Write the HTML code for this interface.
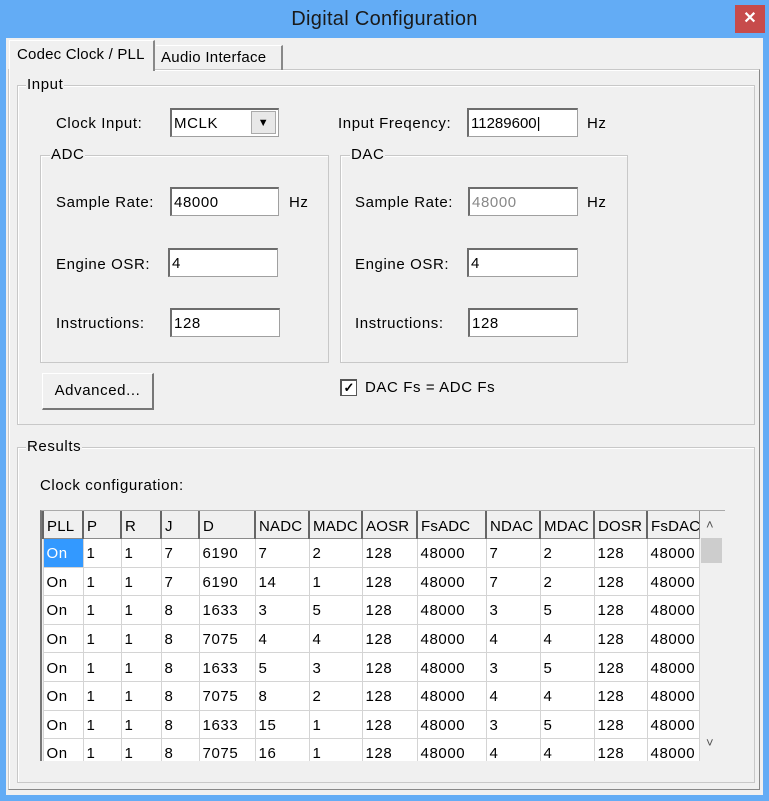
<!DOCTYPE html>
<html><head><style>
*{box-sizing:border-box;margin:0;padding:0}
body{width:769px;height:801px;background:#63acf5;font-family:"Liberation Sans",sans-serif;font-size:15px;letter-spacing:0.6px;color:#000;position:relative;overflow:hidden}
.a{position:absolute}
.title{left:0;top:8px;width:769px;text-align:center;font-size:20px;color:#1a1a1a;letter-spacing:0.3px}
.close{left:735px;top:5px;width:30px;height:28px;background:#c74b4b;color:#fff;text-align:center;font-size:16px;line-height:28px;font-weight:bold;letter-spacing:0}
.win{left:6px;top:38px;width:757px;height:757px;background:#f0f0f0}
.gb{border:1px solid #c8c8c8;box-shadow:inset 1px 1px 0 #fff}
.gl{background:#f0f0f0;padding:0 1px;line-height:16px}
.tf{background:#fff;border:1px solid #a0a0a0;border-top:2px solid #6d6d6d;border-left:2px solid #6d6d6d;padding-left:2px;padding-top:2px;line-height:24px;height:29px}
table{border-collapse:collapse;font-size:15px}
td{border:1px solid #d4d4d4;height:28.6px;padding:2px 0 0 3px;white-space:nowrap;background:#fff;overflow:hidden}
tr.h td{background:#f0f0f0;border:1px solid #8a8a8a;border-top-color:#f0f0f0;border-left:2px solid #666;height:27px;letter-spacing:0.2px}
</style></head><body>
<div class="a title">Digital Configuration</div>
<div class="a close">✕</div>
<div class="a win"></div>
<div class="a" style="left:8px;top:69px;width:752px;height:721px;border:1px solid #c8c8c8;border-right-color:#888;border-bottom-color:#888;box-shadow:inset 1px 1px 0 #fff"></div>
<div class="a" style="left:9px;top:40px;width:146px;height:31px;background:#f0f0f0;border:1px solid #fff;border-bottom:none;border-right:2px solid #888"></div>
<div class="a" style="left:17px;top:46px;letter-spacing:0.2px">Codec Clock / PLL</div>
<div class="a" style="left:156px;top:45px;width:127px;height:25px;border-top:1px solid #fff;border-right:2px solid #888"></div>
<div class="a" style="left:161px;top:49px;letter-spacing:0.3px">Audio Interface</div>
<div class="a gb" style="left:17px;top:85px;width:738px;height:340px"></div>
<div class="a gl" style="left:26px;top:77px">Input</div>
<div class="a" style="left:56px;top:115px">Clock Input:</div>
<div class="a tf" style="left:170px;top:108px;width:109px">MCLK</div>
<div class="a" style="left:251px;top:111px;width:25px;height:23px;background:#e8e8e8;border:1px solid #aaa;text-align:center;font-size:11px;line-height:22px">▼</div>
<div class="a" style="left:338px;top:115px">Input Freqency:</div>
<div class="a tf" style="left:467px;top:108px;width:111px;letter-spacing:0">11289600|</div>
<div class="a" style="left:587px;top:115px">Hz</div>
<div class="a gb" style="left:40px;top:155px;width:289px;height:208px"></div>
<div class="a gl" style="left:50px;top:147px">ADC</div>
<div class="a" style="left:56px;top:194px">Sample Rate:</div>
<div class="a tf" style="left:170px;top:187px;width:109px">48000</div>
<div class="a" style="left:289px;top:194px">Hz</div>
<div class="a" style="left:56px;top:256px">Engine OSR:</div>
<div class="a tf" style="left:168px;top:248px;width:110px">4</div>
<div class="a" style="left:56px;top:315px">Instructions:</div>
<div class="a tf" style="left:170px;top:308px;width:110px">128</div>
<div class="a gb" style="left:340px;top:155px;width:288px;height:208px"></div>
<div class="a gl" style="left:350px;top:147px">DAC</div>
<div class="a" style="left:355px;top:194px">Sample Rate:</div>
<div class="a tf" style="left:468px;top:187px;width:110px;color:#888">48000</div>
<div class="a" style="left:587px;top:194px">Hz</div>
<div class="a" style="left:355px;top:256px">Engine OSR:</div>
<div class="a tf" style="left:467px;top:248px;width:111px">4</div>
<div class="a" style="left:355px;top:315px">Instructions:</div>
<div class="a tf" style="left:468px;top:308px;width:110px">128</div>
<div class="a" style="left:42px;top:373px;width:112px;height:37px;background:#f0f0f0;border:1px solid #fff;border-right:2px solid #777;border-bottom:2px solid #777;text-align:center;line-height:34px">Advanced...</div>
<div class="a" style="left:340px;top:379px;width:17px;height:17px;background:#fff;border:1px solid #555;border-top:2px solid #555;border-left:2px solid #555;font-size:13px;line-height:13px;text-align:center;font-weight:bold;letter-spacing:0">✓</div>
<div class="a" style="left:365px;top:379px">DAC Fs = ADC Fs</div>
<div class="a gb" style="left:17px;top:447px;width:738px;height:336px"></div>
<div class="a gl" style="left:26px;top:439px">Results</div>
<div class="a" style="left:40px;top:477px">Clock configuration:</div>
<div class="a" style="left:40px;top:510px;width:685px;height:251px;background:#f0f0f0;border-left:2px solid #777;border-top:1px solid #aaa;overflow:hidden">
<table style="table-layout:fixed;width:656px">
<colgroup><col style="width:40px"><col style="width:38px"><col style="width:40px"><col style="width:38px"><col style="width:56px"><col style="width:54px"><col style="width:53px"><col style="width:55px"><col style="width:69px"><col style="width:54px"><col style="width:54px"><col style="width:53px"><col style="width:52px"></colgroup>
<tr class="h"><td>PLL</td><td>P</td><td>R</td><td>J</td><td>D</td><td>NADC</td><td>MADC</td><td>AOSR</td><td>FsADC</td><td>NDAC</td><td>MDAC</td><td>DOSR</td><td>FsDAC</td></tr>
<tr><td style="background:#3399ff;color:#fff">On</td><td>1</td><td>1</td><td>7</td><td>6190</td><td>7</td><td>2</td><td>128</td><td>48000</td><td>7</td><td>2</td><td>128</td><td>48000</td></tr>
<tr><td>On</td><td>1</td><td>1</td><td>7</td><td>6190</td><td>14</td><td>1</td><td>128</td><td>48000</td><td>7</td><td>2</td><td>128</td><td>48000</td></tr>
<tr><td>On</td><td>1</td><td>1</td><td>8</td><td>1633</td><td>3</td><td>5</td><td>128</td><td>48000</td><td>3</td><td>5</td><td>128</td><td>48000</td></tr>
<tr><td>On</td><td>1</td><td>1</td><td>8</td><td>7075</td><td>4</td><td>4</td><td>128</td><td>48000</td><td>4</td><td>4</td><td>128</td><td>48000</td></tr>
<tr><td>On</td><td>1</td><td>1</td><td>8</td><td>1633</td><td>5</td><td>3</td><td>128</td><td>48000</td><td>3</td><td>5</td><td>128</td><td>48000</td></tr>
<tr><td>On</td><td>1</td><td>1</td><td>8</td><td>7075</td><td>8</td><td>2</td><td>128</td><td>48000</td><td>4</td><td>4</td><td>128</td><td>48000</td></tr>
<tr><td>On</td><td>1</td><td>1</td><td>8</td><td>1633</td><td>15</td><td>1</td><td>128</td><td>48000</td><td>3</td><td>5</td><td>128</td><td>48000</td></tr>
<tr><td>On</td><td>1</td><td>1</td><td>8</td><td>7075</td><td>16</td><td>1</td><td>128</td><td>48000</td><td>4</td><td>4</td><td>128</td><td>48000</td></tr>
</table>
<div class="a" style="left:658px;top:0;width:25px;height:250px;background:#f0f0f0"></div>
<div class="a" style="left:664px;top:6px;font-size:13px;color:#555">&#x2C4;</div>
<div class="a" style="left:659px;top:27px;width:21px;height:25px;background:#cdcdcd"></div>
<div class="a" style="left:664px;top:224px;font-size:13px;color:#555">&#x2C5;</div>
</div>
</body></html>
